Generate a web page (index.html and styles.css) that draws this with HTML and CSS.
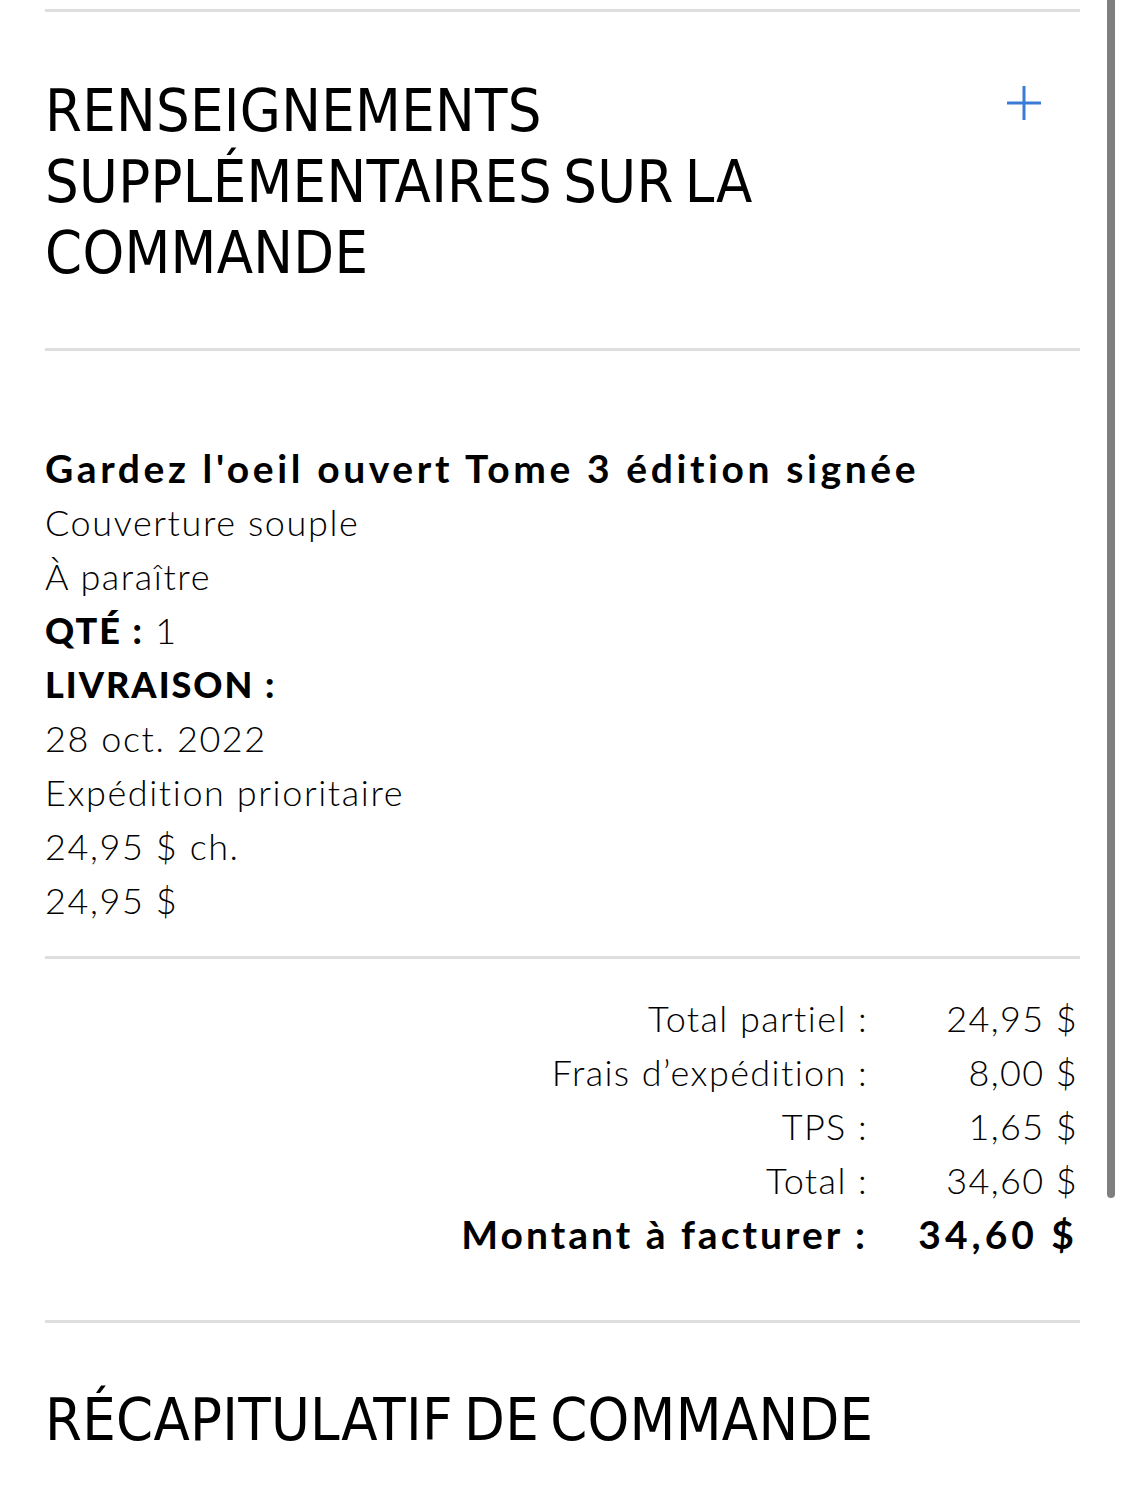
FILE: index.html
```html
<!DOCTYPE html>
<html lang="fr">
<head>
<meta charset="utf-8">
<title>Commande</title>
<link rel="stylesheet" href="styles.css">
</head>
<body>
<div class="page">
  <hr class="divider first">
  <section class="accordion">
    <h2 class="section-title">RENSEIGNEMENTS SUPPLÉMENTAIRES SUR LA COMMANDE</h2>
    <svg class="plus" width="34" height="34" viewBox="0 0 34 34" aria-hidden="true">
      <path d="M17 0V34M0 17H34" stroke="#3a7bd5" stroke-width="3" fill="none"/>
    </svg>
  </section>
  <hr class="divider after-accordion">
  <section class="item">
    <div class="item-title">Gardez l'oeil ouvert Tome 3 édition signée</div>
    <div class="line">Couverture souple</div>
    <div class="line">À paraître</div>
    <div class="line"><strong class="label">QTÉ :</strong> 1</div>
    <div class="line"><strong class="label">LIVRAISON :</strong></div>
    <div class="line">28 oct. 2022</div>
    <div class="line">Expédition prioritaire</div>
    <div class="line">24,95 $ ch.</div>
    <div class="line">24,95 $</div>
  </section>
  <hr class="divider after-item">
  <section class="totals">
    <div class="t-label">Total partiel :</div><div class="t-value">24,95 $</div>
    <div class="t-label">Frais d’expédition :</div><div class="t-value">8,00 $</div>
    <div class="t-label">TPS :</div><div class="t-value">1,65 $</div>
    <div class="t-label">Total :</div><div class="t-value">34,60 $</div>
    <div class="t-label strong">Montant à facturer :</div><div class="t-value strong amount">34,60 $</div>
  </section>
  <hr class="divider after-totals">
  <h2 class="section-title recap">RÉCAPITULATIF DE COMMANDE</h2>
</div>
<div class="scrollbar"></div>
</body>
</html>
```
FILE: styles.css
```css
html, body {
  margin: 0;
  padding: 0;
  background: #ffffff;
  overflow: hidden;
}
body {
  color: #000000;
  font-family: "Lato", "Open Sans", sans-serif;
}
.page {
  width: 1035px;
  padding: 9px 0 0 45px;
}
.divider {
  border: 0;
  height: 3px;
  background: #dedede;
  margin: 0;
}
.accordion {
  display: flex;
  justify-content: space-between;
  align-items: flex-start;
  padding: 63px 0 0 0;
}
.section-title {
  margin: 0;
  font-family: "DejaVu Sans Condensed", "DejaVu Sans", sans-serif;
  font-stretch: condensed;
  font-weight: normal;
  font-size: 59px;
  line-height: 71px;
  letter-spacing: 0.3px;
  word-spacing: -6px;
  max-width: 760px;
}
.plus {
  display: block;
  margin: 11px 39px 0 0;
  flex: none;
}
.after-accordion {
  margin-top: 60px;
}
.item {
  padding-top: 90px;
}
.item-title {
  font-weight: 700;
  font-size: 39px;
  line-height: 54px;
  letter-spacing: 3.6px;
}
.line {
  font-weight: 300;
  font-size: 36px;
  line-height: 54px;
  letter-spacing: 1.6px;
}
.label {
  font-weight: 900;
  letter-spacing: 2px;
}
.after-item {
  margin-top: 29px;
}
.totals {
  display: grid;
  grid-template-columns: 1fr 210px;
  padding: 32px 2px 0 0;
  font-weight: 300;
  font-size: 36px;
  line-height: 54px;
  letter-spacing: 1.4px;
  text-align: right;
}
.totals .strong {
  font-weight: 700;
  font-size: 39px;
  letter-spacing: 3px;
}
.totals .amount {
  letter-spacing: 4px;
}
.after-totals {
  margin-top: 59px;
}
.recap {
  margin-top: 61px;
  max-width: none;
}
.scrollbar {
  position: fixed;
  top: 0;
  left: 1107px;
  width: 8px;
  height: 1198px;
  background: #7f7f7f;
  border-radius: 0 0 4px 4px;
}
```
